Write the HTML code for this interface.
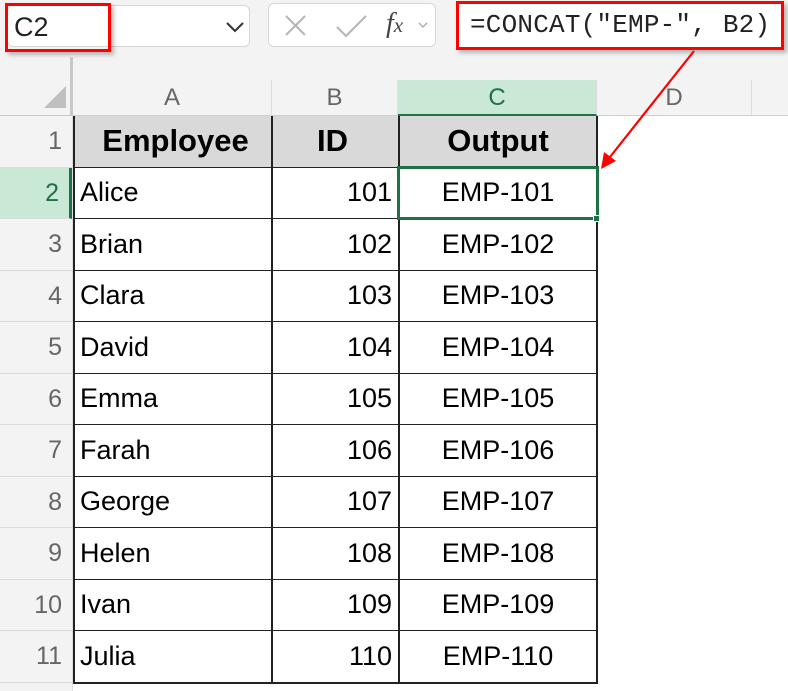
<!DOCTYPE html>
<html><head><style>
*{margin:0;padding:0;box-sizing:border-box}
body{width:788px;height:691px;background:#fff;position:relative;overflow:hidden;font-family:"Liberation Sans",Arial,sans-serif}
.a{position:absolute}
.rh{position:absolute;left:0;width:72px;text-align:right;padding-right:10px;font-size:25px;color:#666;background:#f3f3f3;border-bottom:1px solid #dcdcdc}
.c{position:absolute;font-size:27px;color:#000;display:flex;align-items:center;border-right:2px solid #222;border-bottom:2px solid #222}
.ch{position:absolute;top:80px;height:36px;font-size:24px;color:#666;text-align:center;line-height:36px;border-right:1px solid #ddd;background:#f3f3f3;border-bottom:1px solid #d0d0d0}
</style></head><body>
<div class="a" style="left:0;top:0;width:788px;height:116px;background:#f3f3f3"></div>
<div class="a" style="left:7px;top:5px;width:243px;height:42px;background:#fff;border:1px solid #d6d6d6;border-radius:6px"></div>
<svg class="a" style="left:224px;top:20px" width="22" height="14"><path d="M3 3 L11 11 L19 3" stroke="#333" stroke-width="2" fill="none"/></svg>
<div class="a" style="left:5px;top:3px;width:106px;height:49px;border:3px solid #f00;box-shadow:3px 3px 4px rgba(0,0,0,.25)"></div>
<div class="a" style="left:14px;top:12px;font-size:27px;color:#222">C2</div>
<div class="a" style="left:268px;top:3px;width:168px;height:44px;background:#fff;border:1px solid #d6d6d6;border-radius:6px"></div>
<svg class="a" style="left:283px;top:13px" width="26" height="26"><path d="M3 3 L22 22 M22 3 L3 22" stroke="#b5b5b5" stroke-width="2"/></svg>
<svg class="a" style="left:335px;top:13px" width="34" height="26"><path d="M2 14 L11 23 L31 3" stroke="#b5b5b5" stroke-width="2" fill="none"/></svg>
<div class="a" style="left:386px;top:8px;font-family:'Liberation Serif',serif;font-style:italic;font-size:28px;color:#444">f<span style="font-size:21px">x</span></div>
<svg class="a" style="left:418px;top:22px" width="10" height="7"><path d="M1 1 L5 5 L9 1" stroke="#aaa" stroke-width="1.3" fill="none"/></svg>
<div class="a" style="left:456px;top:1px;width:328px;height:49px;background:#fff;border:3px solid #f00;box-shadow:3px 3px 4px rgba(0,0,0,.25)"></div>
<div class="a" style="left:470px;top:10px;font-family:'Liberation Mono',monospace;font-size:26px;color:#222;letter-spacing:.2px">=CONCAT("EMP-", B2)</div>
<div class="a" style="left:70px;top:57px;width:3px;height:60px;background:#c8c8c8"></div>
<svg class="a" style="left:42px;top:84px" width="28" height="28"><path d="M24 2 L24 24 L2 24 Z" fill="#c0c0c0"/></svg>
<div class="a" style="left:0;top:115px;width:73px;height:2px;background:#c8c8c8"></div>
<div class="ch" style="left:73px;width:199px">A</div>
<div class="ch" style="left:272px;width:126px">B</div>
<div class="ch" style="left:398px;width:199px;background:#c9e8d5;color:#1e7145;border-bottom:2px solid #1e7145">C</div>
<div class="ch" style="left:597px;width:155px">D</div>
<div class="ch" style="left:752px;width:40px"></div>
<div class="a" style="left:0;top:116px;width:73px;height:575px;background:#f3f3f3;border-right:1px solid #dcdcdc"></div>
<div id="rows"></div>
<script>
var d=[["Employee","ID","Output"],["Alice",101],["Brian",102],["Clara",103],["David",104],["Emma",105],["Farah",106],["George",107],["Helen",108],["Ivan",109],["Julia",110]];
var h="";
for(var i=0;i<11;i++){
 var t=116+i*51.5,hh=51.5;
 var sel=i==1;
 h+='<div class="rh" style="top:'+t+'px;height:'+hh+'px;line-height:'+hh+'px;'+(sel?'background:#c9e8d5;color:#1e7145;border-right:3px solid #1e7145;':'')+'">'+(i+1)+'</div>';
 var bg=i==0?'#d9d9d9':'#fff',fw=i==0?'bold':'normal',fs=i==0?'31px':'27px';
 var c3=i==0?'Output':'EMP-'+d[i][1];
 h+='<div class="c" style="left:73px;top:'+t+'px;width:200px;height:'+(hh+1)+'px;background:'+bg+';font-weight:'+fw+';font-size:'+fs+';justify-content:'+(i==0?'center':'flex-start')+';padding-left:5px;border-left:2px solid #222;">'+d[i][0]+'</div>';
 h+='<div class="c" style="left:271px;top:'+t+'px;width:129px;height:'+(hh+1)+'px;background:'+bg+';font-weight:'+fw+';font-size:'+fs+';justify-content:'+(i==0?'center':'flex-end')+';padding-right:6px;border-left:2px solid #222">'+d[i][1]+'</div>';
 h+='<div class="c" style="left:398px;top:'+t+'px;width:200px;height:'+(hh+1)+'px;background:'+bg+';font-weight:'+fw+';font-size:'+fs+';justify-content:center;border-left:2px solid #222">'+c3+'</div>';
}
h+='<div class="a" style="left:397px;top:166px;width:202px;height:54px;border:3px solid #1e7145"></div>';
h+='<div class="a" style="left:593px;top:215px;width:7px;height:7px;background:#1e7145;border:1px solid #fff"></div>';
document.getElementById("rows").innerHTML=h;
</script>
<svg class="a" style="left:0;top:0" width="788" height="691">
<line x1="694" y1="51" x2="610" y2="157" stroke="#f00" stroke-width="2.2"/>
<path d="M601 169 L604 152 L616 161 Z" fill="#f00"/>
</svg>
</body></html>
